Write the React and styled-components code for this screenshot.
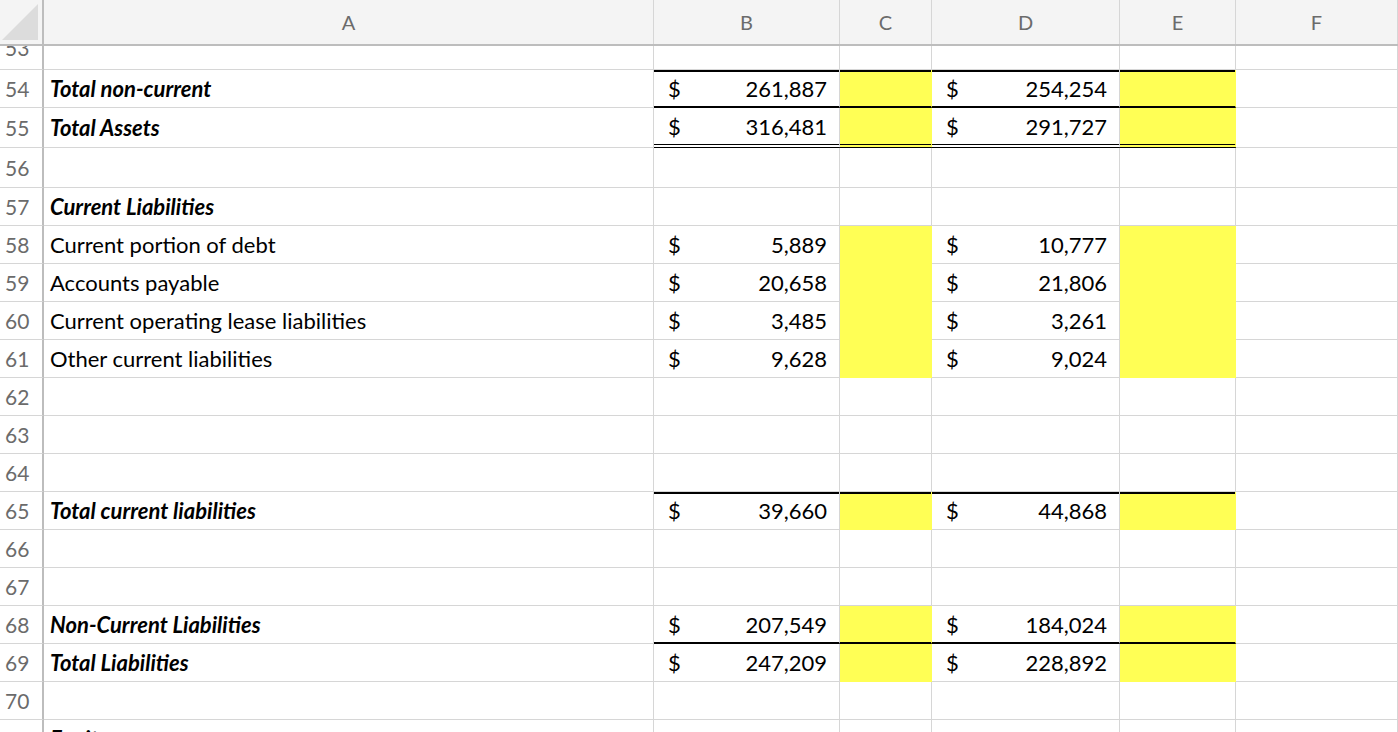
import React from 'react';
import styled, { createGlobalStyle, css } from 'styled-components';

const Global = createGlobalStyle`
  body { margin: 0; background: #fff; overflow: hidden; }
`;

const COLS = '44px 610px 186px 92px 188px 116px 1fr';

const Sheet = styled.div`
  width: 1398px;
  height: 732px;
  overflow: hidden;
  font-family: Lato, "Noto Sans", sans-serif;
`;

const HeaderRow = styled.div`
  display: grid;
  grid-template-columns: ${COLS};
  height: 46px;
  background: #f4f4f4;
  border-bottom: 2px solid #bdbdbd;
  box-sizing: border-box;
`;

const Corner = styled.div`
  position: relative;
  border-right: 2px solid #bdbdbd;
  &::after {
    content: '';
    position: absolute;
    right: 4px;
    bottom: 4px;
    border-style: solid;
    border-width: 0 0 36px 36px;
    border-color: transparent transparent #dcdcdc transparent;
  }
`;

const ColHead = styled.div`
  display: flex;
  align-items: center;
  justify-content: center;
  color: #6b6b6b;
  font-size: 20px;
  border-right: 1px solid #d6d6d6;
`;

const Row = styled.div`
  display: grid;
  grid-template-columns: ${COLS};
  height: ${p => p.$h || 38}px;
`;

const RowNum = styled.div`
  display: flex;
  align-items: center;
  padding-left: 5px;
  color: #6b6b6b;
  font-size: 21px;
  border-right: 2px solid #bdbdbd;
  border-bottom: 1px solid #d6d6d6;
  overflow: hidden;
`;

const ClipNum = styled.span`
  display: block;
  margin-top: -20px;
`;

const Cell = styled.div`
  display: flex;
  align-items: center;
  justify-content: space-between;
  padding: 0 12px 0 6px;
  font-size: 22px;
  color: #000;
  border-right: 1px solid #d6d6d6;
  border-bottom: 1px solid #d6d6d6;
  background: ${p => (p.$fill ? '#ffff55' : '#fff')};
  font-weight: ${p => (p.$bold ? 700 : 400)};
  font-style: ${p => (p.$bold ? 'italic' : 'normal')};
  ${p => p.$fill && css`border-right-color: #ffff55; border-bottom-color: #ffff55;`}
  ${p => p.$top && css`box-shadow: inset 0 2px 0 #000;`}
  ${p => p.$bottom && css`border-bottom: 2px solid #000;`}
  ${p => p.$double && css`border-bottom: 4px double #000;`}
`;

const Money = styled.span`
  &:first-child { padding-left: 8px; }
`;

const rows = [
  { n: 54, label: 'Total non-current', bold: true, b: '261,887', d: '254,254', fill: true, top: true, bottom: true },
  { n: 55, label: 'Total Assets', bold: true, b: '316,481', d: '291,727', fill: true, double: true, h: 40 },
  { n: 56, h: 40 },
  { n: 57, label: 'Current Liabilities', bold: true },
  { n: 58, label: 'Current portion of debt', b: '5,889', d: '10,777', fill: true },
  { n: 59, label: 'Accounts payable', b: '20,658', d: '21,806', fill: true },
  { n: 60, label: 'Current operating lease liabilities', b: '3,485', d: '3,261', fill: true },
  { n: 61, label: 'Other current liabilities', b: '9,628', d: '9,024', fill: true },
  { n: 62 },
  { n: 63 },
  { n: 64 },
  { n: 65, label: 'Total current liabilities', bold: true, b: '39,660', d: '44,868', fill: true, top: true },
  { n: 66 },
  { n: 67 },
  { n: 68, label: 'Non-Current Liabilities', bold: true, b: '207,549', d: '184,024', fill: true, bottom: true },
  { n: 69, label: 'Total Liabilities', bold: true, b: '247,209', d: '228,892', fill: true },
  { n: 70 },
  { n: 71, label: 'Equity', bold: true },
];

function Amount({ value, ...rest }) {
  return (
    <Cell {...rest}>
      {value && <Money>$</Money>}
      {value && <Money>{value}</Money>}
    </Cell>
  );
}

export default function App() {
  return (
    <Sheet>
      <Global />
      <HeaderRow>
        <Corner />
        {['A', 'B', 'C', 'D', 'E', 'F'].map(c => <ColHead key={c}>{c}</ColHead>)}
      </HeaderRow>
      <Row $h={24}>
        <RowNum><ClipNum>53</ClipNum></RowNum>
        <Cell /><Cell /><Cell /><Cell /><Cell /><Cell />
      </Row>
      {rows.map(r => {
        const edge = { $top: r.top, $bottom: r.bottom, $double: r.double };
        return (
          <Row key={r.n} $h={r.h}>
            <RowNum>{r.n}</RowNum>
            <Cell $bold={r.bold}>{r.label}</Cell>
            <Amount value={r.b} {...edge} />
            <Cell $fill={r.fill} {...edge} />
            <Amount value={r.d} {...edge} />
            <Cell $fill={r.fill} {...edge} />
            <Cell />
          </Row>
        );
      })}
    </Sheet>
  );
}
